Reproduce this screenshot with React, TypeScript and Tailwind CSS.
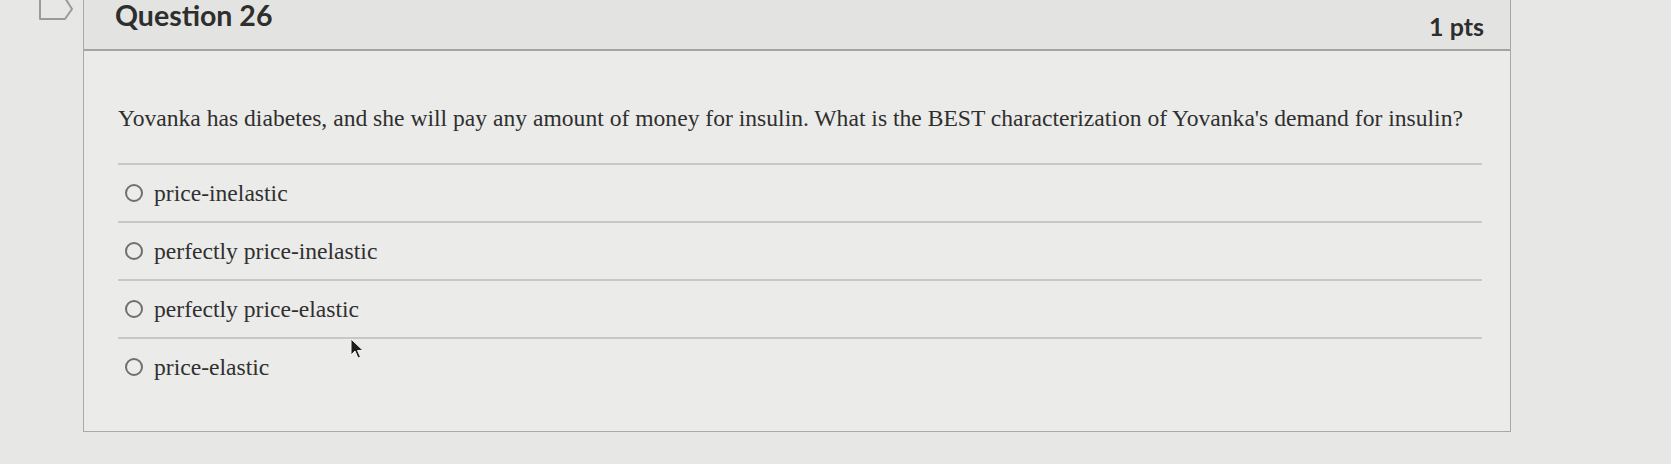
import React from 'react';

const options = [
  'price-inelastic',
  'perfectly price-inelastic',
  'perfectly price-elastic',
  'price-elastic',
];

function FlagIcon() {
  return (
    <svg width="38" height="22" viewBox="0 0 38 22" fill="none">
      <path d="M3 -2 V19 H28 L35 9 L28 -2" stroke="#9a9a9a" strokeWidth="2" strokeLinejoin="round" />
    </svg>
  );
}

function Cursor() {
  return (
    <svg width="14" height="22" viewBox="0 0 14 22">
      <path d="M1 1 L1 17 L5 13 L8 20 L10.5 19 L7.5 12.5 L13 12.5 Z" fill="#1d1d1d" stroke="#f2f2f2" strokeWidth="1" />
    </svg>
  );
}

export default function App() {
  return (
    <div className="relative flex h-[464px] w-[1671px] overflow-hidden bg-[#e7e7e6]">
      <div className="w-[83px] shrink-0 pl-[37px]">
        <FlagIcon />
      </div>

      <div className="flex h-[432px] w-[1428px] flex-col border-x border-b border-[#a9a9a9] bg-[#ebebea]">
        <div className="flex h-[51px] shrink-0 items-start justify-between border-b-2 border-[#a4a4a4] bg-[#e3e3e2] pl-[31px] pr-[26px] font-['Lato',sans-serif] text-[#2e2e2e]">
          <span className="text-[28.5px] font-bold leading-[30px]">Question 26</span>
          <span className="mt-[11px] text-[25px] font-bold leading-[30px]">1 pts</span>
        </div>

        <div className="flex flex-1 flex-col pl-[34px] pr-[28px] pt-[52px] font-['Liberation_Serif',serif] text-[#2f2f2f]">
          <p className="text-[23.6px] leading-[30px]">
            Yovanka has diabetes, and she will pay any amount of money for insulin. What is the BEST characterization of Yovanka's demand for insulin?
          </p>

          <div className="mt-[30px] flex flex-col">
            {options.map((o) => (
              <label key={o} className="flex h-[58px] items-center gap-[11px] border-t-2 border-[#c8c8c7] pl-[7px]">
                <span className="h-[18px] w-[18px] rounded-full border-2 border-[#707070] bg-[#ececeb]" />
                <span className="text-[23.6px] leading-[30px] text-[#303030]">{o}</span>
              </label>
            ))}
          </div>
        </div>
      </div>

      <div className="absolute left-[350px] top-[338px]">
        <Cursor />
      </div>
    </div>
  );
}
